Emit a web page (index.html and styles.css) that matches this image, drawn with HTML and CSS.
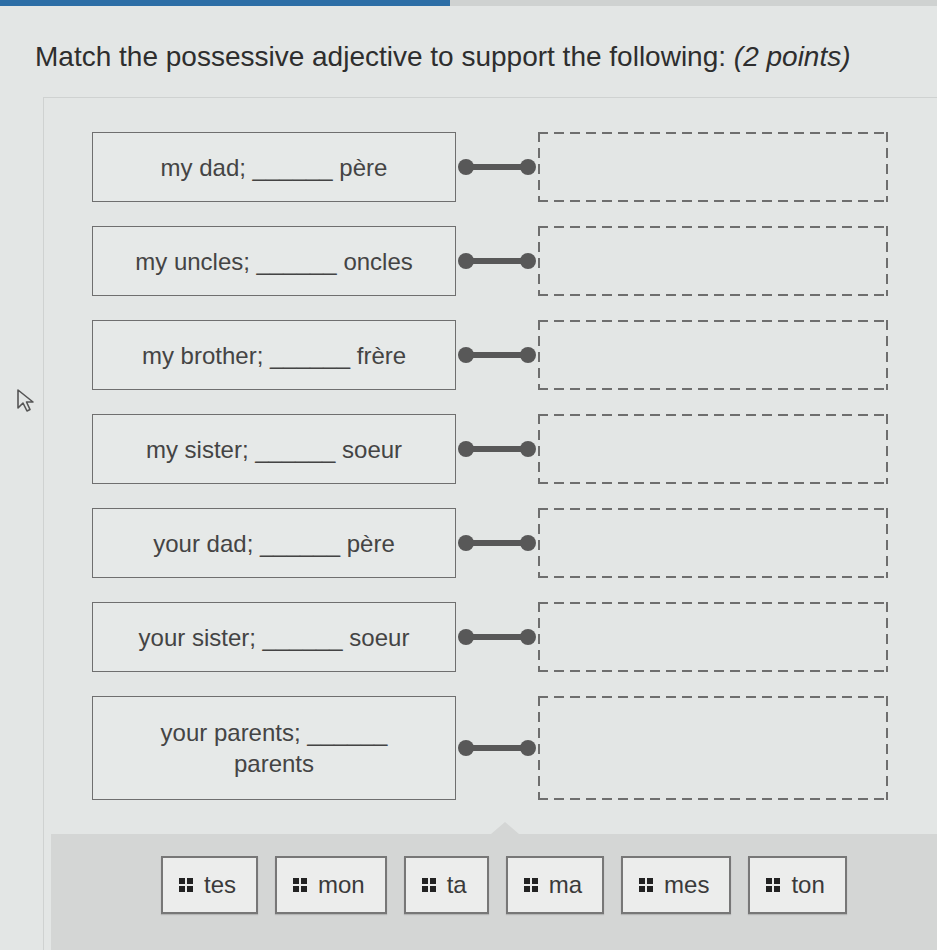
FILE: index.html
```html
<!DOCTYPE html>
<html>
<head>
<meta charset="utf-8">
<link rel="stylesheet" href="styles.css">
</head>
<body>
<div class="topbar"><div class="topbar-blue"></div><div class="topbar-rest"></div></div>
<h1 class="title">Match the possessive adjective to support the following: <em>(2 points)</em></h1>
<div class="panel">
  <div class="rows">
    <div class="row"><div class="prompt">my dad; ______ père</div><div class="connector"><span class="dot"></span><span class="bar"></span><span class="dot"></span></div><div class="drop"></div></div>
    <div class="row"><div class="prompt">my uncles; ______ oncles</div><div class="connector"><span class="dot"></span><span class="bar"></span><span class="dot"></span></div><div class="drop"></div></div>
    <div class="row"><div class="prompt">my brother; ______ frère</div><div class="connector"><span class="dot"></span><span class="bar"></span><span class="dot"></span></div><div class="drop"></div></div>
    <div class="row"><div class="prompt">my sister; ______ soeur</div><div class="connector"><span class="dot"></span><span class="bar"></span><span class="dot"></span></div><div class="drop"></div></div>
    <div class="row"><div class="prompt">your dad; ______ père</div><div class="connector"><span class="dot"></span><span class="bar"></span><span class="dot"></span></div><div class="drop"></div></div>
    <div class="row"><div class="prompt">your sister; ______ soeur</div><div class="connector"><span class="dot"></span><span class="bar"></span><span class="dot"></span></div><div class="drop"></div></div>
    <div class="row row-tall"><div class="prompt prompt-wrap">your parents; ______<br>parents</div><div class="connector"><span class="dot"></span><span class="bar"></span><span class="dot"></span></div><div class="drop"></div></div>
  </div>
  <div class="tray">
    <span class="notch"></span>
    <div class="chip"><span class="grip"><i></i><i></i><i></i><i></i></span>tes</div>
    <div class="chip"><span class="grip"><i></i><i></i><i></i><i></i></span>mon</div>
    <div class="chip"><span class="grip"><i></i><i></i><i></i><i></i></span>ta</div>
    <div class="chip"><span class="grip"><i></i><i></i><i></i><i></i></span>ma</div>
    <div class="chip"><span class="grip"><i></i><i></i><i></i><i></i></span>mes</div>
    <div class="chip"><span class="grip"><i></i><i></i><i></i><i></i></span>ton</div>
  </div>
</div>
<svg class="cursor" width="22" height="26" viewBox="0 0 22 26"><path d="M2 2 L2 20 L7 15 L11 23 L14 21.5 L10.5 14 L17 14 Z" fill="none" stroke="#555" stroke-width="1.6" stroke-linejoin="round"/></svg>
</body>
</html>
```
FILE: styles.css
```css
html, body {
  margin: 0;
  padding: 0;
}
body {
  width: 937px;
  height: 950px;
  overflow: hidden;
  background: #e3e6e5;
  font-family: "Liberation Sans", Arial, sans-serif;
  color: #3d3d3d;
  position: relative;
}
.topbar {
  display: flex;
  height: 6px;
}
.topbar-blue {
  width: 450px;
  background: #2d6ea6;
}
.topbar-rest {
  flex: 1;
  background: #cfd2d1;
}
.title {
  margin: 35px 0 0 35px;
  font-size: 28px;
  font-weight: normal;
  color: #2e2e2e;
  letter-spacing: 0;
  line-height: 32px;
}
.title em {
  font-style: italic;
}
.panel {
  margin: 24px 0 0 43px;
  border-top: 1px solid #cfd2d1;
  border-left: 1px solid #cfd2d1;
  height: 860px;
}
.rows {
  display: flex;
  flex-direction: column;
  gap: 24px;
  padding: 34px 0 0 48px;
}
.row {
  display: flex;
  align-items: center;
  height: 70px;
}
.row-tall {
  height: 104px;
}
.prompt {
  width: 364px;
  height: 100%;
  box-sizing: border-box;
  border: 1.5px solid #6f6f6f;
  display: flex;
  align-items: center;
  justify-content: center;
  font-size: 24px;
  color: #444;
  text-align: center;
  line-height: 31px;
  background: #e6e9e8;
}
.connector {
  display: flex;
  align-items: center;
  width: 80px;
  padding-left: 2px;
}
.dot {
  width: 16px;
  height: 16px;
  border-radius: 50%;
  background: #585858;
  flex: none;
}
.bar {
  width: 52px;
  height: 6px;
  background: #585858;
  margin: 0 -3px;
}
.drop {
  width: 350px;
  height: 100%;
  box-sizing: border-box;
  border: 2px solid transparent;
  background:
    repeating-linear-gradient(90deg, #6e6e6e 0 10px, transparent 10px 16px) top left / 100% 2px no-repeat,
    repeating-linear-gradient(90deg, #6e6e6e 0 10px, transparent 10px 16px) bottom left / 100% 2px no-repeat,
    repeating-linear-gradient(180deg, #6e6e6e 0 10px, transparent 10px 16px) top left / 2px 100% no-repeat,
    repeating-linear-gradient(180deg, #6e6e6e 0 10px, transparent 10px 16px) top right / 2px 100% no-repeat;
  background-origin: border-box;
}
.tray {
  position: relative;
  margin-top: 34px;
  margin-left: 7px;
  height: 120px;
  background: #d4d6d5;
  display: flex;
  align-items: flex-start;
  gap: 17px;
  padding: 22px 0 0 110px;
  box-sizing: border-box;
}
.notch {
  position: absolute;
  top: -12px;
  left: 440px;
  width: 0;
  height: 0;
  border-left: 14px solid transparent;
  border-right: 14px solid transparent;
  border-bottom: 12px solid #d4d6d5;
}
.chip {
  display: flex;
  align-items: center;
  gap: 11px;
  height: 58px;
  padding: 0 20px 0 16px;
  box-sizing: border-box;
  border: 2px solid #777;
  background: #ecedec;
  font-size: 24px;
  color: #3a3a3a;
  box-shadow: 0 1px 1px rgba(0,0,0,0.15);
}
.grip {
  display: grid;
  grid-template-columns: 6px 6px;
  grid-auto-rows: 6px;
  gap: 2px;
}
.grip i {
  display: block;
  background: #222;
}
.cursor {
  position: absolute;
  left: 16px;
  top: 388px;
}
```
